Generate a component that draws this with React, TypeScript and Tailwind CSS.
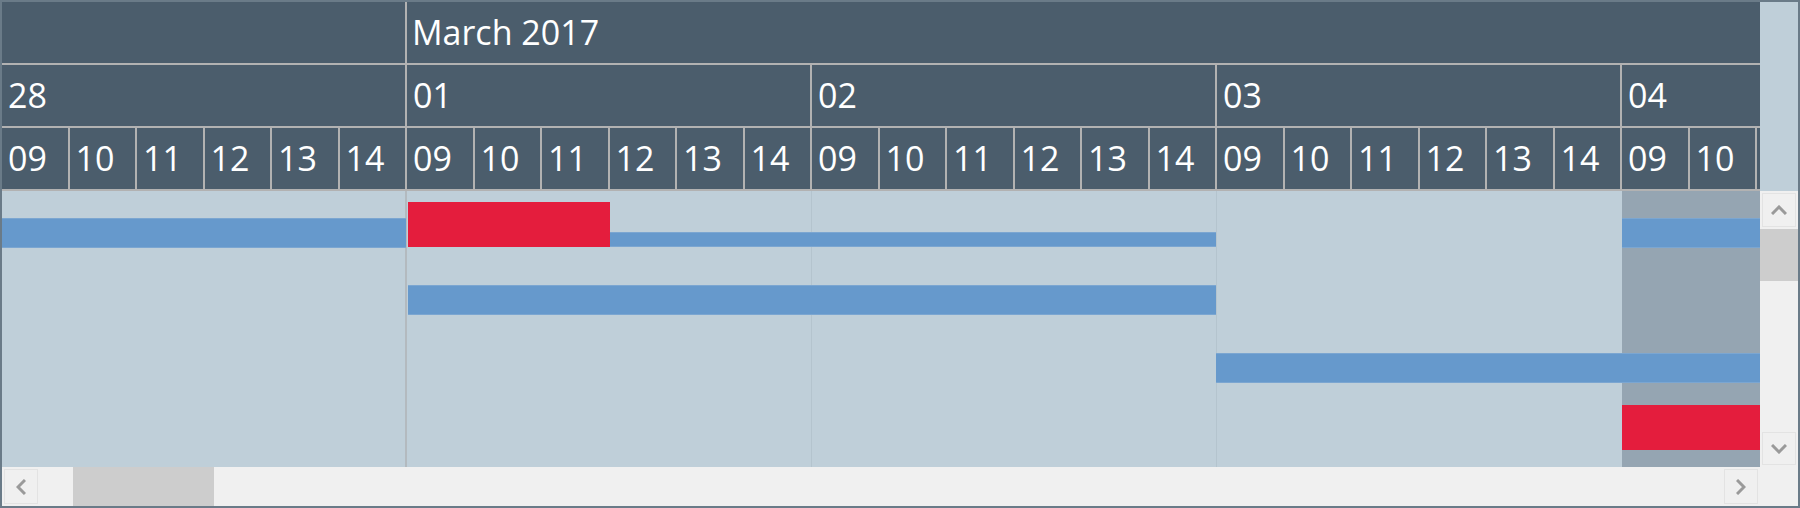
import React from "react";

const days = ["28", "01", "02", "03", "04"];
const hours = ["09", "10", "11", "12", "13", "14"];

// bars are positioned on the gantt canvas, coordinates relative to the body
const bars = [
  { left: 0, top: 27, width: 404, height: 30, color: "blue" },
  { left: 406, top: 11, width: 202, height: 45, color: "red" },
  { left: 608, top: 41, width: 606, height: 15, color: "blue" },
  { left: 1620, top: 27, width: 138, height: 30, color: "blue" },
  { left: 406, top: 94, width: 808, height: 30, color: "blue" },
  { left: 1214, top: 162, width: 544, height: 30, color: "blue" },
  { left: 1620, top: 214, width: 138, height: 45, color: "red" },
];

function Chevron({ dir }: { dir: "up" | "down" | "left" | "right" }) {
  const pts = {
    up: "1,9 8,2 15,9",
    down: "1,1 8,8 15,1",
    left: "9,1 2,8 9,15",
    right: "1,1 8,8 1,15",
  }[dir];
  const vertical = dir === "up" || dir === "down";
  return (
    <svg
      width={vertical ? 16 : 10}
      height={vertical ? 10 : 16}
      viewBox={vertical ? "0 0 16 10" : "0 0 10 16"}
    >
      <polyline points={pts} fill="none" stroke="#9a9a9a" strokeWidth="3" />
    </svg>
  );
}

function ScrollButton({ dir, className }: { dir: "up" | "down" | "left" | "right"; className: string }) {
  return (
    <div className={`${className} p-[2px]`}>
      <div className="w-full h-full border border-[#e3e3e3] flex items-center justify-center">
        <Chevron dir={dir} />
      </div>
    </div>
  );
}

export default function App() {
  return (
    <div className="w-[1800px] h-[508px] border-2 border-[#6a7b88] bg-[#f0f0f0] flex flex-col overflow-hidden font-['Open_Sans',sans-serif] text-white">
      <div className="flex h-[465px]">
        <div className="w-[1758px] flex flex-col overflow-hidden">
          {/* month row */}
          <div className="flex h-[63px] shrink-0 border-b-2 border-[#b2b2b2] bg-[#4b5d6c]">
            <div className="w-[405px] shrink-0 border-r-2 border-[#b2b2b2]" />
            <div className="flex-1 flex items-center pl-[5px] text-[34px]">March 2017</div>
          </div>
          {/* day row */}
          <div className="flex h-[63px] shrink-0 border-b-2 border-[#b2b2b2] bg-[#4b5d6c]">
            {days.map((d, i) => (
              <div
                key={d}
                className={
                  i === days.length - 1
                    ? "flex-1 flex items-center pl-[6px] text-[34px]"
                    : "w-[405px] shrink-0 border-r-2 border-[#b2b2b2] flex items-center pl-[6px] text-[34px]"
                }
              >
                {d}
              </div>
            ))}
          </div>
          {/* hour row, last day only partly visible */}
          <div className="flex h-[63px] shrink-0 border-b-2 border-[#b2b2b2] bg-[#4b5d6c]">
            {days.map((d, i) =>
              (i === days.length - 1 ? hours.slice(0, 2) : hours).map((h) => (
                <div
                  key={d + h}
                  className="w-[67.5px] shrink-0 border-r-2 border-[#b2b2b2] flex items-center pl-[6px] text-[34px]"
                >
                  {h}
                </div>
              ))
            )}
            <div className="flex-1" />
          </div>
          {/* body */}
          <div className="relative flex-1 flex bg-[#bfcfd9]">
            <div className="w-[405px] shrink-0 border-r-2 border-[#b3babf]" />
            <div className="w-[405px] shrink-0 border-r border-[#b4c4ce]" />
            <div className="w-[405px] shrink-0 border-r border-[#b4c4ce]" />
            <div className="w-[405px] shrink-0" />
            <div className="flex-1 bg-[#95a5b2]" />
            {bars.map((b, i) => (
              <div
                key={i}
                className={
                  b.color === "red"
                    ? "absolute bg-[#e41d3d]"
                    : "absolute bg-[#6699cc] border-y border-[#7ba6d1]"
                }
                style={{ left: b.left, top: b.top, width: b.width, height: b.height }}
              />
            ))}
          </div>
        </div>
        <div className="w-[38px] flex flex-col">
          <div className="h-[189px] shrink-0 bg-[#bfcfd9]" />
          <div className="flex-1 flex flex-col bg-[#f0f0f0]">
            <ScrollButton dir="up" className="h-[38px] shrink-0" />
            <div className="h-[52px] shrink-0 bg-[#cdcdcd]" />
            <div className="flex-1" />
            <ScrollButton dir="down" className="h-[37px] shrink-0" />
          </div>
        </div>
      </div>
      <div className="flex h-[39px]">
        <div className="w-[1758px] flex bg-[#f0f0f0]">
          <ScrollButton dir="left" className="w-[38px] shrink-0" />
          <div className="w-[33px] shrink-0" />
          <div className="w-[141px] shrink-0 bg-[#cdcdcd]" />
          <div className="flex-1" />
          <ScrollButton dir="right" className="w-[38px] shrink-0" />
        </div>
        <div className="w-[38px] bg-[#f0f0f0]" />
      </div>
    </div>
  );
}
